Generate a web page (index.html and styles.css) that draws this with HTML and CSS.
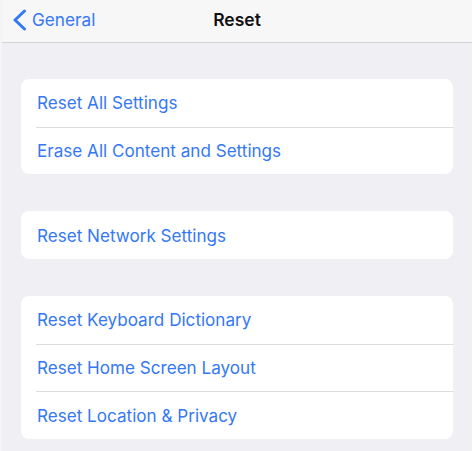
FILE: index.html
```html
<!DOCTYPE html>
<html>
<head>
<meta charset="utf-8">
<link rel="stylesheet" href="styles.css">
</head>
<body>
<div class="screen">
  <header class="nav">
    <div class="back">
      <svg class="chev" width="15" height="22" viewBox="0 0 15 22"><path d="M12.5 2 L3 11 L12.5 20" fill="none" stroke="#3478f6" stroke-width="3" stroke-linecap="round" stroke-linejoin="round"/></svg>
      <span>General</span>
    </div>
    <div class="title">Reset</div>
  </header>
  <main class="content">
    <section class="group">
      <div class="row">Reset All Settings</div>
      <div class="row">Erase All Content and Settings</div>
    </section>
    <section class="group">
      <div class="row">Reset Network Settings</div>
    </section>
    <section class="group">
      <div class="row">Reset Keyboard Dictionary</div>
      <div class="row">Reset Home Screen Layout</div>
      <div class="row">Reset Location &amp; Privacy</div>
    </section>
  </main>
</div>
</body>
</html>
```
FILE: styles.css
```css
html, body { margin: 0; padding: 0; }
body {
  width: 474px;
  height: 451px;
  overflow: hidden;
  background: #efeff4;
  font-family: Inter, "Liberation Sans", Arial, sans-serif;
}
.screen {
  height: 451px;
  border-left: 2px solid #f4f4f7;
  border-right: 2px solid #ffffff;
  box-sizing: border-box;
  background: #efeff4;
}
.nav {
  height: 43px;
  box-sizing: border-box;
  padding-bottom: 3px;
  background: #f7f7f8;
  border-bottom: 1px solid #d2d2d7;
  position: relative;
  display: flex;
  align-items: center;
  justify-content: center;
}
.back {
  position: absolute;
  left: 10px;
  top: 0;
  bottom: 3px;
  display: flex;
  align-items: center;
  gap: 5px;
  color: #3478f6;
  font-size: 17.2px;
}
.chev { display: block; }
.title {
  font-size: 17.5px;
  font-weight: 600;
  color: #111;
}
.content {
  padding: 36px 19px 0 19px;
  display: flex;
  flex-direction: column;
  gap: 37px;
}
.group {
  background: #fff;
  border-radius: 8px;
  overflow: hidden;
}
.row {
  height: 47.7px;
  display: flex;
  align-items: center;
  padding-left: 16px;
  color: #3478f6;
  font-size: 17.1px;
  position: relative;
}
.row + .row::before {
  content: "";
  position: absolute;
  top: 0;
  left: 15px;
  right: 0;
  height: 1px;
  background: #dcdce0;
}
```
